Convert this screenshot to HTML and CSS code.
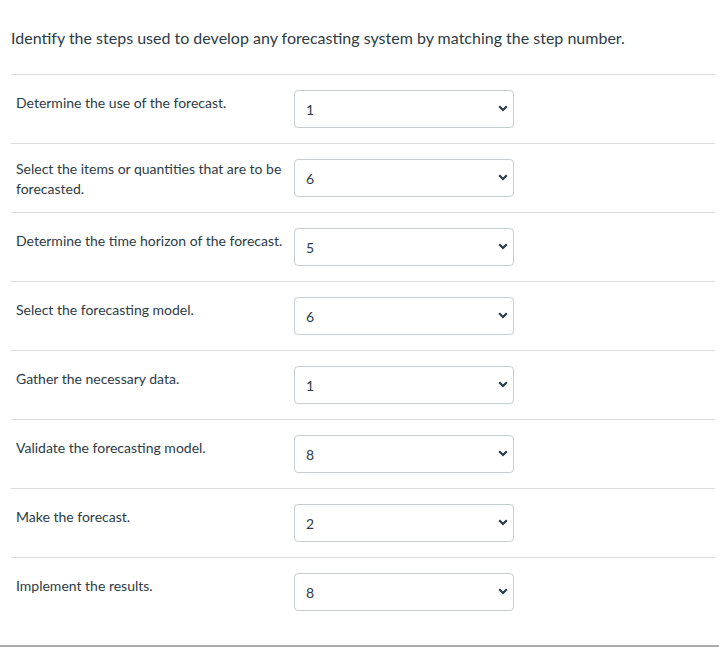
FILE: index.html
```html
<!DOCTYPE html>
<html>
<head>
<meta charset="utf-8">
<link rel="stylesheet" href="styles.css">
</head>
<body>
<div class="question">
  <p class="prompt">Identify the steps used to develop any forecasting system by matching the step number.</p>
  <div class="answers">
    <div class="row">
      <div class="label">Determine the use of the forecast.</div>
      <div class="pick"><select class="sel"><option>1</option></select><svg class="chev" width="10" height="7" viewBox="0 0 10 7"><path d="M1.2 1.3 L5 5 L8.8 1.3" fill="none" stroke="#2d3b45" stroke-width="2.2"/></svg></div>
    </div>
    <div class="row">
      <div class="label two">Select the items or quantities that are to be forecasted.</div>
      <div class="pick"><select class="sel"><option>6</option></select><svg class="chev" width="10" height="7" viewBox="0 0 10 7"><path d="M1.2 1.3 L5 5 L8.8 1.3" fill="none" stroke="#2d3b45" stroke-width="2.2"/></svg></div>
    </div>
    <div class="row">
      <div class="label">Determine the time horizon of the forecast.</div>
      <div class="pick"><select class="sel"><option>5</option></select><svg class="chev" width="10" height="7" viewBox="0 0 10 7"><path d="M1.2 1.3 L5 5 L8.8 1.3" fill="none" stroke="#2d3b45" stroke-width="2.2"/></svg></div>
    </div>
    <div class="row">
      <div class="label">Select the forecasting model.</div>
      <div class="pick"><select class="sel"><option>6</option></select><svg class="chev" width="10" height="7" viewBox="0 0 10 7"><path d="M1.2 1.3 L5 5 L8.8 1.3" fill="none" stroke="#2d3b45" stroke-width="2.2"/></svg></div>
    </div>
    <div class="row">
      <div class="label">Gather the necessary data.</div>
      <div class="pick"><select class="sel"><option>1</option></select><svg class="chev" width="10" height="7" viewBox="0 0 10 7"><path d="M1.2 1.3 L5 5 L8.8 1.3" fill="none" stroke="#2d3b45" stroke-width="2.2"/></svg></div>
    </div>
    <div class="row">
      <div class="label">Validate the forecasting model.</div>
      <div class="pick"><select class="sel"><option>8</option></select><svg class="chev" width="10" height="7" viewBox="0 0 10 7"><path d="M1.2 1.3 L5 5 L8.8 1.3" fill="none" stroke="#2d3b45" stroke-width="2.2"/></svg></div>
    </div>
    <div class="row">
      <div class="label">Make the forecast.</div>
      <div class="pick"><select class="sel"><option>2</option></select><svg class="chev" width="10" height="7" viewBox="0 0 10 7"><path d="M1.2 1.3 L5 5 L8.8 1.3" fill="none" stroke="#2d3b45" stroke-width="2.2"/></svg></div>
    </div>
    <div class="row">
      <div class="label">Implement the results.</div>
      <div class="pick"><select class="sel"><option>8</option></select><svg class="chev" width="10" height="7" viewBox="0 0 10 7"><path d="M1.2 1.3 L5 5 L8.8 1.3" fill="none" stroke="#2d3b45" stroke-width="2.2"/></svg></div>
    </div>
  </div>
</div>
</body>
</html>
```
FILE: styles.css
```css
html, body {
  margin: 0;
  padding: 0;
  background: #ffffff;
}
body {
  font-family: Lato, "Open Sans", sans-serif;
  color: #2d3b45;
}
.question {
  border-bottom: 2px solid #ababab;
  padding-bottom: 19px;
}
.prompt {
  margin: 0;
  padding: 26px 11px 24px 11px;
  font-size: 16px;
  line-height: 24px;
}
.answers {
  margin: 0 4px 0 11px;
}
.row {
  display: flex;
  align-items: flex-start;
  border-top: 1px solid #dcdcdc;
  height: 68px;
  padding-left: 5px;
}
.label {
  width: 272px;
  padding-top: 17.5px;
  font-size: 14px;
  line-height: 20px;
}
.label.two {
  padding-top: 15px;
}
.pick {
  position: relative;
  margin-left: 6px;
  margin-top: 15px;
}
.sel {
  appearance: none;
  -webkit-appearance: none;
  width: 220px;
  height: 38px;
  box-sizing: border-box;
  border: 1px solid #c7cdd1;
  border-radius: 4px;
  background: #ffffff;
  padding: 0 30px 0 11px;
  font-family: Lato, "Open Sans", sans-serif;
  font-size: 14px;
  color: #2d3b45;
}
.chev {
  position: absolute;
  right: 6px;
  top: 15px;
  pointer-events: none;
}
```
